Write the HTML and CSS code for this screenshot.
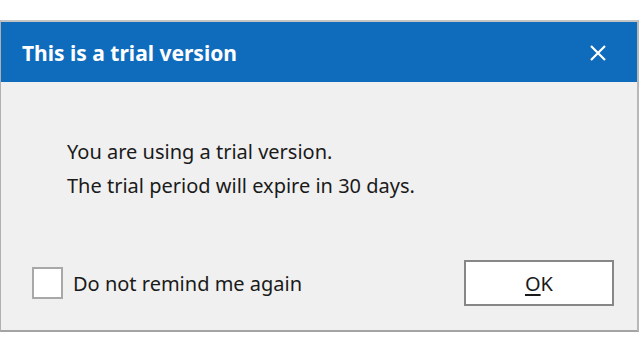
FILE: index.html
```html
<!DOCTYPE html>
<html>
<head>
<meta charset="utf-8">
<link rel="stylesheet" href="styles.css">
</head>
<body>
<div class="dialog">
  <div class="titlebar">
    <span class="title">This is a trial version</span>
    <svg class="close" width="16" height="16" viewBox="0 0 16 16"><path d="M1 1 L15 15 M15 1 L1 15" stroke="#fff" stroke-width="2.2" fill="none"/></svg>
  </div>
  <div class="content">
    <p class="line">You are using a trial version.</p>
    <p class="line">The trial period will expire in 30 days.</p>
  </div>
  <div class="footer">
    <label class="check"><span class="box"></span><span class="label">Do not remind me again</span></label>
    <button class="ok"><span class="u">O</span>K</button>
  </div>
</div>
</body>
</html>
```
FILE: styles.css
```css
html, body { margin: 0; padding: 0; background: #fff; }
body { font-family: "Noto Sans", "Open Sans", sans-serif; color: #1a1a1a; }
.dialog {
  margin-top: 20px;
  width: 639px;
  height: 312px;
  box-sizing: border-box;
  border-top: 2px solid #c4c4c4;
  border-left: 1px solid #b0b0b0;
  border-right: 2px solid #b8b8b8;
  border-bottom: 2px solid #a4a4a4;
  background: #f0f0f0;
  display: flex;
  flex-direction: column;
}
.titlebar {
  height: 60px;
  box-sizing: border-box;
  padding: 1px 31px 0 21px;
  background: #0f6cbd;
  display: flex;
  align-items: center;
  justify-content: space-between;
}
.title { color: #fff; font-weight: bold; font-size: 21px; }
.close { display: block; }
.content { flex: 1; padding: 53px 0 0 66px; }
.line { margin: 0; font-size: 20px; line-height: 34px; }
.footer {
  display: flex;
  align-items: center;
  justify-content: space-between;
  padding: 0 23px 24px 31px;
}
.check { display: flex; align-items: center; gap: 10px; }
.box { width: 27px; height: 28px; border: 2px solid #a8a8a8; background: #fff; display: block; }
.label { font-size: 20px; }
.ok {
  width: 150px; height: 46px;
  border: 2px solid #878787;
  background: #fff;
  font-family: inherit; font-size: 20px; color: #1a1a1a;
  padding: 0;
}
.u { text-decoration: underline; text-underline-offset: 3px; }
```
